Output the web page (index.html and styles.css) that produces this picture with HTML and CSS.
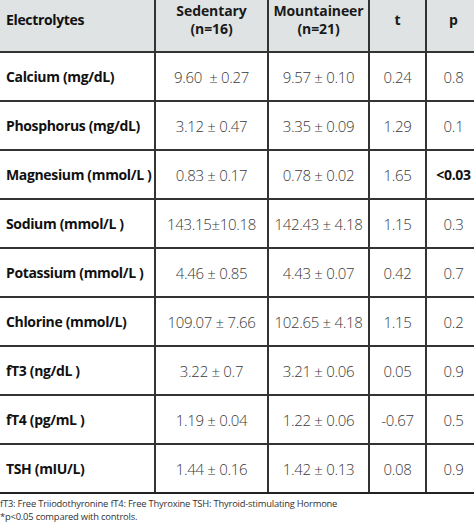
FILE: index.html
```html
<!DOCTYPE html>
<html>
<head>
<meta charset="utf-8">
<link rel="stylesheet" href="styles.css">
</head>
<body>
<div class="page">
<table class="data">
  <colgroup>
    <col class="c1"><col class="c2"><col class="c3"><col class="c4"><col class="c5">
  </colgroup>
  <thead>
    <tr>
      <th class="lab">Electrolytes</th>
      <th>Sedentary<br>(n=16)</th>
      <th>Mountaineer<br>(n=21)</th>
      <th>t</th>
      <th>p</th>
    </tr>
  </thead>
  <tbody>
    <tr><td class="lab">Calcium (mg/dL)</td><td>9.60&nbsp;&nbsp;± 0.27</td><td>9.57 ± 0.10</td><td>0.24</td><td>0.8</td></tr>
    <tr><td class="lab">Phosphorus (mg/dL)</td><td>3.12 ± 0.47</td><td>3.35 ± 0.09</td><td>1.29</td><td>0.1</td></tr>
    <tr><td class="lab">Magnesium (mmol/L )</td><td>0.83 ± 0.17</td><td>0.78 ± 0.02</td><td>1.65</td><td class="sig">&lt;0.03</td></tr>
    <tr><td class="lab">Sodium (mmol/L )</td><td>143.15±10.18</td><td>142.43 ± 4.18</td><td>1.15</td><td>0.3</td></tr>
    <tr><td class="lab">Potassium (mmol/L )</td><td>4.46 ± 0.85</td><td>4.43 ± 0.07</td><td>0.42</td><td>0.7</td></tr>
    <tr><td class="lab">Chlorine (mmol/L)</td><td>109.07 ± 7.66</td><td>102.65 ± 4.18</td><td>1.15</td><td>0.2</td></tr>
    <tr><td class="lab">fT3 (ng/dL )</td><td>3.22 ± 0.7</td><td>3.21 ± 0.06</td><td>0.05</td><td>0.9</td></tr>
    <tr><td class="lab">fT4 (pg/mL )</td><td>1.19 ± 0.04</td><td>1.22 ± 0.06</td><td>-0.67</td><td>0.5</td></tr>
    <tr class="last"><td class="lab">TSH (mIU/L)</td><td>1.44 ± 0.16</td><td>1.42 ± 0.13</td><td>0.08</td><td>0.9</td></tr>
  </tbody>
</table>
<div class="notes">
  <p>fT3: Free Triiodothyronine fT4: Free Thyroxine TSH: Thyroid-stimulating Hormone</p>
  <p>*p&lt;0.05 compared with controls.</p>
</div>
</div>
</body>
</html>
```

FILE: styles.css
```css
html, body {
  margin: 0;
  padding: 0;
  background: #ffffff;
  overflow: hidden;
}
.page {
  width: 474px;
  height: 527px;
  overflow: hidden;
  font-family: "Open Sans", "Noto Sans", sans-serif;
  color: #222;
}
.data {
  width: 480px;
  table-layout: fixed;
  border-collapse: collapse;
}
.c1 { width: 155px; }
.c2 { width: 113px; }
.c3 { width: 101px; }
.c4 { width: 57px; }
.c5 { width: 54px; }
.data th, .data td {
  border-left: 2px solid #333;
  border-bottom: 2px solid #333;
  padding: 0;
  text-align: center;
  vertical-align: middle;
  white-space: nowrap;
  overflow: hidden;
}
.data th:first-child, .data td:first-child {
  border-left: none;
}
.data thead th {
  background: #dfe3e3;
  height: 39px;
  padding-bottom: 12px;
  font-size: 14px;
  font-weight: 700;
  line-height: 18px;
  color: #1a1a1a;
  letter-spacing: -0.1px;
}
.data tbody td {
  height: 47px;
  font-size: 15px;
  font-weight: 300;
  color: #3a3a3a;
  letter-spacing: -0.3px;
}
.data tbody tr.last td {
  border-bottom: 2px solid #222;
}
.data .lab {
  text-align: left;
  padding-left: 6px;
  font-size: 14px;
  font-weight: 700;
  color: #111;
  letter-spacing: -0.35px;
}
.data td.sig {
  font-size: 14px;
  font-weight: 700;
  color: #111;
}
.notes {
  padding-top: 3px;
  font-size: 9.4px;
  line-height: 13px;
  color: #333;
  letter-spacing: -0.2px;
}
.notes p {
  margin: 0;
}
```
